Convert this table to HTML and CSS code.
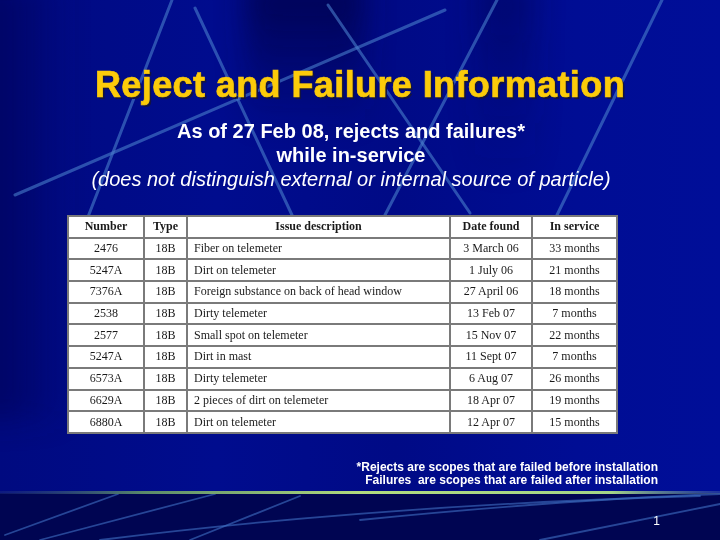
FILE: index.html
```html
<!DOCTYPE html>
<html>
<head>
<meta charset="utf-8">
<link rel="stylesheet" href="styles.css">
</head>
<body>
<div class="slide">
  <svg class="backdrop" width="720" height="540" viewBox="0 0 720 540" aria-hidden="true">
    <defs>
      <linearGradient id="green" x1="0" y1="0" x2="1" y2="0">
        <stop offset="0" stop-color="#1a2a80" stop-opacity="0.5"/>
        <stop offset="0.2" stop-color="#5a8a6a"/>
        <stop offset="0.5" stop-color="#b2dc7e"/>
        <stop offset="0.85" stop-color="#a4d488"/>
        <stop offset="1" stop-color="#4a6aa0" stop-opacity="0.4"/>
      </linearGradient>
      <linearGradient id="band1" x1="0" y1="0" x2="0" y2="1">
        <stop offset="0" stop-color="#000340" stop-opacity="0.75"/>
        <stop offset="1" stop-color="#000340" stop-opacity="0"/>
      </linearGradient>
      <linearGradient id="band2" x1="0" y1="0" x2="1" y2="0">
        <stop offset="0" stop-color="#000450" stop-opacity="0.65"/>
        <stop offset="1" stop-color="#000450" stop-opacity="0"/>
      </linearGradient>
      <filter id="soft" x="-50%" y="-50%" width="200%" height="200%">
        <feGaussianBlur stdDeviation="14"/>
      </filter>
      <filter id="haze" x="-10%" y="-10%" width="120%" height="120%">
        <feGaussianBlur stdDeviation="0.6"/>
      </filter>
    </defs>
    <g filter="url(#soft)">
      <rect x="245" y="-20" width="120" height="150" fill="url(#band1)"/>
      <rect x="-20" y="-20" width="90" height="440" fill="url(#band2)"/>
      <rect x="475" y="-20" width="60" height="200" fill="url(#band1)" opacity="0.5"/>
    </g>
    <g class="streaks" filter="url(#haze)">
      <line x1="172" y1="0" x2="86" y2="222"/>
      <line x1="195" y1="8" x2="292" y2="215"/>
      <line x1="15" y1="195" x2="445" y2="10"/>
      <line x1="328" y1="5" x2="470" y2="213"/>
      <line x1="497" y1="0" x2="385" y2="215"/>
      <line x1="662" y1="0" x2="557" y2="215"/>
    </g>
    <rect x="0" y="493" width="720" height="47" fill="#000552"/>
    <g class="streaks low" filter="url(#haze)">
      <line x1="5" y1="535" x2="118" y2="494"/>
      <line x1="40" y1="540" x2="215" y2="494"/>
      <path d="M100 540 Q380 505 700 496"/>
      <line x1="190" y1="540" x2="300" y2="496"/>
      <path d="M360 520 Q560 500 720 494"/>
      <line x1="540" y1="540" x2="720" y2="504"/>
    </g>
    <rect x="0" y="491" width="720" height="3" fill="url(#green)"/>
  </svg>

  <div class="content">
    <h1 class="title">Reject and Failure Information</h1>
    <p class="sub"><span class="strong">As of 27 Feb 08, rejects and failures*<br>while in-service</span><br><span class="ital">(does not distinguish external or internal source of particle)</span></p>

    <table class="data">
      <colgroup>
        <col class="c-num"><col class="c-type"><col class="c-desc"><col class="c-date"><col class="c-svc">
      </colgroup>
      <thead>
        <tr><th>Number</th><th>Type</th><th>Issue description</th><th>Date found</th><th>In service</th></tr>
      </thead>
      <tbody>
        <tr><td>2476</td><td>18B</td><td class="desc">Fiber on telemeter</td><td>3 March 06</td><td>33 months</td></tr>
        <tr><td>5247A</td><td>18B</td><td class="desc">Dirt on telemeter</td><td>1 July 06</td><td>21 months</td></tr>
        <tr><td>7376A</td><td>18B</td><td class="desc">Foreign substance on back of head window</td><td>27 April 06</td><td>18 months</td></tr>
        <tr><td>2538</td><td>18B</td><td class="desc">Dirty telemeter</td><td>13 Feb 07</td><td>7 months</td></tr>
        <tr><td>2577</td><td>18B</td><td class="desc">Small spot on telemeter</td><td>15 Nov 07</td><td>22 months</td></tr>
        <tr><td>5247A</td><td>18B</td><td class="desc">Dirt in mast</td><td>11 Sept 07</td><td>7 months</td></tr>
        <tr><td>6573A</td><td>18B</td><td class="desc">Dirty telemeter</td><td>6 Aug 07</td><td>26 months</td></tr>
        <tr><td>6629A</td><td>18B</td><td class="desc">2 pieces of dirt on telemeter</td><td>18 Apr 07</td><td>19 months</td></tr>
        <tr><td>6880A</td><td>18B</td><td class="desc">Dirt on telemeter</td><td>12 Apr 07</td><td>15 months</td></tr>
      </tbody>
    </table>

    <p class="note">*Rejects are scopes that are failed before installation<br>Failures&nbsp; are scopes that are failed after installation</p>
    <div class="pagenum">1</div>
  </div>
</div>
</body>
</html>
```

FILE: styles.css
```css
html, body {
  margin: 0;
  padding: 0;
  background: #000a8a;
}

.slide {
  position: relative;
  width: 720px;
  height: 540px;
  overflow: hidden;
  background: linear-gradient(90deg, #000a80 0%, #000c8e 30%, #000a86 55%, #000d94 80%, #000e98 100%);
  font-family: "Liberation Sans", Arial, sans-serif;
}

.backdrop {
  position: absolute;
  left: 0;
  top: 0;
  z-index: 0;
}

.streaks line,
.streaks path {
  stroke: #4a7fcc;
  stroke-opacity: 0.6;
  stroke-width: 3;
  stroke-linecap: round;
  fill: none;
}

.streaks.low line,
.streaks.low path {
  stroke: #3f72c4;
  stroke-opacity: 0.6;
  stroke-width: 1.8;
}

.content {
  position: relative;
  z-index: 1;
  padding-top: 63px;
}

.title {
  margin: 0;
  text-align: center;
  font-size: 36px;
  line-height: 43px;
  font-weight: bold;
  letter-spacing: 0.4px;
  color: #fccb0a;
  -webkit-text-stroke: 0.7px #fccb0a;
  text-shadow: 2px 2px 0 #141440;
}

.sub {
  margin: 13px 0 0 0;
  padding-right: 18px;
  text-align: center;
  font-size: 20px;
  line-height: 24px;
  color: #ffffff;
}

.sub .strong {
  font-weight: bold;
}

.sub .ital {
  font-style: italic;
}

.data {
  margin: 24px 0 0 67px;
  width: 549px;
  border-collapse: collapse;
  table-layout: fixed;
  background: #ffffff;
  font-family: "Liberation Serif", "Times New Roman", serif;
  font-size: 12px;
  color: #1a1a1a;
}

.c-num { width: 76px; }
.c-type { width: 43px; }
.c-desc { width: 263px; }
.c-date { width: 82px; }
.c-svc { width: 85px; }

.data th,
.data td {
  border: 2px solid #7a7a7a;
  height: 19.7px;
  padding: 0;
  text-align: center;
  vertical-align: middle;
  white-space: nowrap;
}

.data th {
  font-weight: bold;
}

.data td.desc {
  text-align: left;
  padding-left: 6px;
}

.note {
  margin: 27px 0 0 0;
  padding-right: 62px;
  text-align: right;
  font-size: 12px;
  line-height: 13.5px;
  font-weight: bold;
  color: #ffffff;
}

.pagenum {
  margin-top: 26px;
  padding-right: 60px;
  text-align: right;
  font-size: 12px;
  line-height: 14px;
  color: #ffffff;
}
```
